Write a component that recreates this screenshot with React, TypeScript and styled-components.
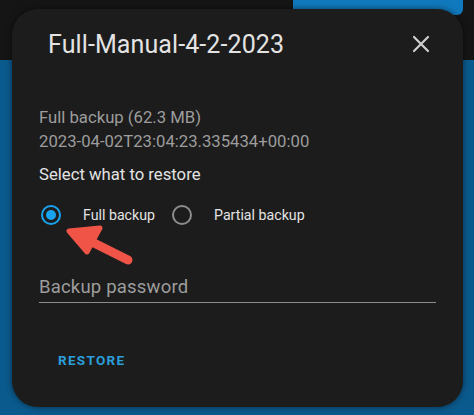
import React from "react";
import styled, { createGlobalStyle } from "styled-components";

const GlobalStyle = createGlobalStyle`
  html, body {
    margin: 0;
    padding: 0;
    background: #0b5a8d;
  }
  body {
    font-family: Roboto, "Noto Sans", Arial, sans-serif;
  }
`;

const Backdrop = styled.div`
  position: relative;
  width: 474px;
  height: 415px;
  overflow: hidden;
  background: linear-gradient(to bottom, #151515 0, #151515 60px, #0b5a8d 60px);
  padding: 9px 11px 8px 12px;
  box-sizing: border-box;
`;

// blue header of the page behind the dialog
const TopBar = styled.div`
  position: absolute;
  top: -20px;
  left: 293px;
  width: 170px;
  height: 35px;
  background: #1079bd;
  border-radius: 0 0 6px 0;
`;

const Dialog = styled.div`
  position: relative;
  height: 100%;
  background: #1c1c1c;
  border-radius: 26px;
  display: flex;
  flex-direction: column;
  box-shadow: 0 0 6px rgba(0, 0, 0, 0.5);
`;

const Header = styled.div`
  display: flex;
  align-items: center;
  justify-content: space-between;
  padding: 14px 30px 0 36px;
  height: 42px;
`;

const Title = styled.h2`
  margin: 0;
  font-size: 25px;
  font-weight: 400;
  color: #e3e3e3;
  letter-spacing: 0.1px;
`;

const CloseButton = styled.button`
  background: none;
  border: none;
  padding: 0;
  width: 24px;
  height: 24px;
  display: flex;
  align-items: center;
  justify-content: center;
  cursor: pointer;
`;

const Body = styled.div`
  padding: 41px 27px 0 27px;
  display: flex;
  flex-direction: column;
`;

const Meta = styled.div`
  font-size: 16.7px;
  line-height: 24px;
  color: #9d9d9d;
`;

const Label = styled.div`
  margin-top: 9px;
  font-size: 16.7px;
  line-height: 24px;
  color: #e3e3e3;
`;

const RadioGroup = styled.div`
  display: flex;
  align-items: center;
  margin-top: 16px;
  height: 24px;
`;

const RadioOption = styled.label`
  display: flex;
  align-items: center;
  font-size: 14.2px;
  color: #e3e3e3;
  margin-right: 15px;
`;

const RadioCircle = styled.span<{ $checked?: boolean }>`
  width: 20px;
  height: 20px;
  box-sizing: border-box;
  border-radius: 50%;
  border: 2px solid ${(p) => (p.$checked ? "#19a3ef" : "#8d8d8d")};
  display: flex;
  align-items: center;
  justify-content: center;
  margin: 0 22px 0 2px;

  &::after {
    content: "";
    width: 10px;
    height: 10px;
    border-radius: 50%;
    background: #19a3ef;
    display: ${(p) => (p.$checked ? "block" : "none")};
  }
`;

const PasswordField = styled.div`
  margin-top: 48px;
  border-bottom: 1px solid #8c8c8c;
  padding-bottom: 3px;
  width: 397px;
`;

const PasswordInput = styled.input`
  background: transparent;
  border: none;
  outline: none;
  width: 100%;
  padding: 0;
  font-family: inherit;
  font-size: 18.5px;
  line-height: 24px;
  color: #e3e3e3;

  &::placeholder {
    color: #9d9d9d;
    letter-spacing: 0.2px;
  }
`;

const Actions = styled.div`
  padding: 47px 0 0 46px;
`;

const TextButton = styled.button`
  background: none;
  border: none;
  padding: 0;
  font-family: inherit;
  font-size: 13.5px;
  font-weight: 700;
  letter-spacing: 1.3px;
  color: #2a9fdb;
  cursor: pointer;
`;

const Annotation = styled.svg`
  position: absolute;
  left: 0;
  top: 0;
  pointer-events: none;
`;

export default function App() {
  return (
    <>
      <GlobalStyle />
      <Backdrop>
        <TopBar />
        <Dialog>
          <Header>
            <Title>Full-Manual-4-2-2023</Title>
            <CloseButton aria-label="close">
              <svg width="18" height="18" viewBox="0 0 18 18">
                <path
                  d="M2 2 L16 16 M16 2 L2 16"
                  stroke="#cfcfcf"
                  strokeWidth="2.2"
                  strokeLinecap="round"
                />
              </svg>
            </CloseButton>
          </Header>
          <Body>
            <Meta>Full backup (62.3 MB)</Meta>
            <Meta>2023-04-02T23:04:23.335434+00:00</Meta>
            <Label>Select what to restore</Label>
            <RadioGroup>
              <RadioOption>
                <RadioCircle $checked />
                Full backup
              </RadioOption>
              <RadioOption>
                <RadioCircle />
                Partial backup
              </RadioOption>
            </RadioGroup>
            <PasswordField>
              <PasswordInput type="password" placeholder="Backup password" />
            </PasswordField>
          </Body>
          <Actions>
            <TextButton>RESTORE</TextButton>
          </Actions>
        </Dialog>
        <Annotation width="474" height="415" viewBox="0 0 474 415">
          <path
            d="M128 260 L88 240"
            stroke="#f05446"
            strokeWidth="9"
            strokeLinecap="round"
          />
          <path
            d="M69 231 L100 228 L87 252 Z"
            fill="#f05446"
            stroke="#f05446"
            strokeWidth="5"
            strokeLinejoin="round"
          />
        </Annotation>
      </Backdrop>
    </>
  );
}
